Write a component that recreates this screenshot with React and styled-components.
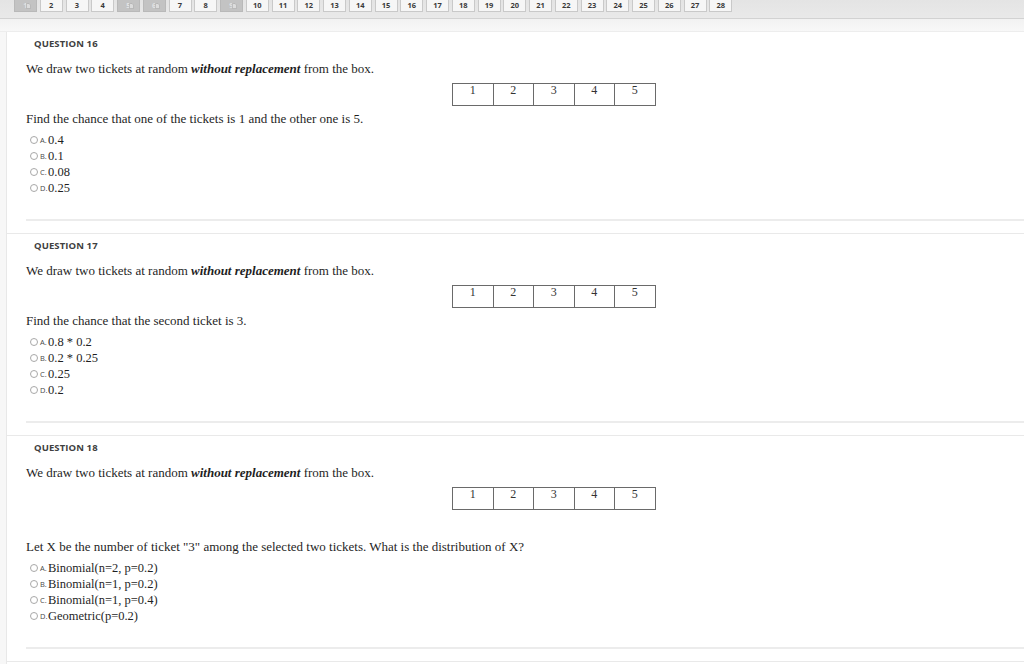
import React from "react"
import styled, { createGlobalStyle } from "styled-components"

const GlobalStyle = createGlobalStyle`
  html, body {
    margin: 0;
    padding: 0;
    background: #ffffff;
    overflow: hidden;
  }
  body {
    font-family: "Liberation Serif", "Times New Roman", serif;
    color: #222;
  }
`

const Page = styled.div`
  width: 1024px;
  height: 664px;
  overflow: hidden;
  display: flex;
  flex-direction: column;
`

const TopBar = styled.div`
  height: 18px;
  background: linear-gradient(#e4e4e4, #e9e9e9);
  border-bottom: 1px solid #d2d2d2;
  display: flex;
  align-items: flex-start;
  gap: 2.75px;
  padding-left: 14px;
  flex-shrink: 0;
`

const NavButton = styled.div`
  position: relative;
  width: 23px;
  height: 12px;
  box-sizing: border-box;
  border: 1px solid ${(p) => (p.$locked ? "#b9b9b9" : "#c9c9c9")};
  border-top: none;
  background: ${(p) => (p.$locked ? "#c3c3c3" : "#f6f6f6")};
  color: ${(p) => (p.$locked ? "#e2e2e2" : "#3a3a3a")};
  font-family: "Open Sans", "DejaVu Sans", sans-serif;
  font-weight: 700;
  font-size: 7.5px;
  line-height: 11px;
  text-align: center;
  flex-shrink: 0;
`

const LockIcon = styled.svg`
  position: absolute;
  right: 5px;
  top: 3px;
`

const SubBar = styled.div`
  height: 12px;
  background: linear-gradient(#f2f2f2, #f8f8f8);
  border-bottom: 1px solid #ededed;
  flex-shrink: 0;
`

const Body = styled.div`
  flex: 1;
  display: flex;
  min-height: 0;
`

const Gutter = styled.div`
  width: 6px;
  background: #f7f7f7;
  border-right: 1px solid #e8e8e8;
  flex-shrink: 0;
`

const Content = styled.div`
  flex: 1;
  min-width: 0;
  display: flex;
  flex-direction: column;
`

const Section = styled.section`
  padding-top: 6px;
  border-bottom: 1px solid #e9e9e9;
  padding-bottom: 12px;
`

const Heading = styled.h3`
  margin: 0 0 0 27px;
  font-family: "Open Sans", "DejaVu Sans", sans-serif;
  font-weight: 700;
  font-size: 9.5px;
  line-height: 12px;
  letter-spacing: 0.1px;
  color: #404040;
  text-transform: uppercase;
`

const Inner = styled.div`
  margin-left: 19px;
`

const Text = styled.p`
  margin: ${(p) => p.$top || 0}px 0 0 0;
  font-size: 13px;
  line-height: 16px;
  color: #1f1f1f;
  white-space: nowrap;
`

const Box = styled.table`
  margin: 6px 0 0 426px;
  border-collapse: collapse;
  font-family: "Liberation Serif", "Times New Roman", serif;
  font-size: 12px;
  color: #333;
  td {
    width: 39.5px;
    height: 21px;
    padding: 0;
    border: 1px solid #6a6a6a;
    text-align: center;
    vertical-align: top;
    line-height: 13px;
  }
`

const Options = styled.div`
  margin-top: ${(p) => p.$top}px;
  display: flex;
  flex-direction: column;
`

const Option = styled.label`
  display: flex;
  align-items: center;
  height: 16px;
  padding-left: 4px;
`

const Radio = styled.span`
  width: 6px;
  height: 6px;
  border-radius: 50%;
  border: 1px solid #a8a8a8;
  background: #fff;
  flex-shrink: 0;
`

const Letter = styled.span`
  margin-left: 2px;
  width: 8px;
  font-family: "Open Sans", "DejaVu Sans", sans-serif;
  font-size: 7.5px;
  color: #4a4a4a;
  flex-shrink: 0;
`

const Value = styled.span`
  font-size: 12.5px;
  color: #1f1f1f;
  white-space: nowrap;
`

const Rule = styled.div`
  margin-top: ${(p) => p.$top}px;
  margin-left: 19px;
  height: 2px;
  background: #ececec;
`

const navItems = Array.from({ length: 28 }, (_, i) => i + 1)
const locked = [1, 5, 6, 9]

const Lead = () => (
  <Text $top={11}>
    We draw two tickets at random <b><i>without replacement</i></b> from the box.
  </Text>
)

const TicketBox = () => (
  <Box>
    <tbody>
      <tr>
        {[1, 2, 3, 4, 5].map((n) => (
          <td key={n}>{n}</td>
        ))}
      </tr>
    </tbody>
  </Box>
)

const questions = [
  {
    num: 16,
    prompt: "Find the chance that one of the tickets is 1 and the other one is 5.",
    promptTop: 5,
    options: ["0.4", "0.1", "0.08", "0.25"],
    optTop: 5,
    ruleTop: 23,
  },
  {
    num: 17,
    prompt: "Find the chance that the second ticket is 3.",
    promptTop: 5,
    options: ["0.8 * 0.2", "0.2 * 0.25", "0.25", "0.2"],
    optTop: 5,
    ruleTop: 23,
  },
  {
    num: 18,
    prompt:
      'Let X be the number of ticket "3" among the selected two tickets. What is the distribution of X?',
    promptTop: 29,
    options: [
      "Binomial(n=2, p=0.2)",
      "Binomial(n=1, p=0.2)",
      "Binomial(n=1, p=0.4)",
      "Geometric(p=0.2)",
    ],
    optTop: 5,
    ruleTop: 23,
  },
]

const letters = ["A.", "B.", "C.", "D."]

export default function App() {
  return (
    <Page>
      <GlobalStyle />
      <TopBar>
        {navItems.map((n) => {
          const isLocked = locked.includes(n)
          return (
            <NavButton key={n} $locked={isLocked}>
              {n}
              {isLocked && (
                <LockIcon width="5" height="6" viewBox="0 0 5 6">
                  <path d="M0.5 0.5h2.5l1.5 1.5v3.5h-4z" fill="#dcdcdc" stroke="#a9a9a9" strokeWidth="0.6" />
                </LockIcon>
              )}
            </NavButton>
          )
        })}
      </TopBar>
      <SubBar />
      <Body>
        <Gutter />
        <Content>
          {questions.map((q) => (
            <Section key={q.num}>
              <Heading>Question {q.num}</Heading>
              <Inner>
                <Lead />
                <TicketBox />
                <Text $top={q.promptTop}>{q.prompt}</Text>
                <Options $top={q.optTop}>
                  {q.options.map((o, i) => (
                    <Option key={o}>
                      <Radio />
                      <Letter>{letters[i]}</Letter>
                      <Value>{o}</Value>
                    </Option>
                  ))}
                </Options>
              </Inner>
              <Rule $top={q.ruleTop} />
            </Section>
          ))}
        </Content>
      </Body>
    </Page>
  )
}
